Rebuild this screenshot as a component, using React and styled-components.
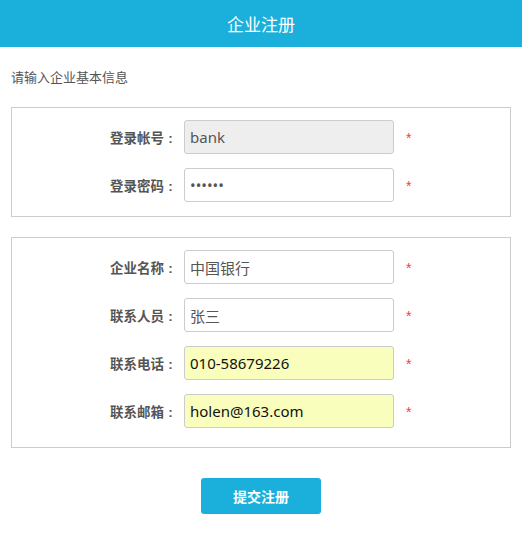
import React from 'react';
import styled, { createGlobalStyle } from 'styled-components';

const GlobalStyle = createGlobalStyle`
    html, body {
        margin: 0;
        padding: 0;
        background: #fff;
    }

    body {
        font-family: "Noto Sans", "Noto Sans CJK SC", sans-serif;
        color: #555;
    }
`;

const BRAND_COLOR = '#1bb0db';

const Header = styled.div`
    height: 47px;
    background-color: ${BRAND_COLOR};
    color: #fff;
    font-size: 17px;
    display: flex;
    align-items: center;
    justify-content: center;
    font-family: "Noto Sans CJK SC", sans-serif;
`;

const Page = styled.div`
    padding: 0 11px;
`;

const Intro = styled.div`
    font-family: "Noto Sans CJK SC", sans-serif;
    font-size: 13px;
    color: #555;
    margin: 21px 0 21px;
    line-height: 18px;
`;

const Fieldset = styled.div`
    border: 1px solid #ccc;
    padding: 12px 0 ${(p) => p.bottom}px;
    margin-bottom: 20px;
    display: flex;
    flex-direction: column;
    gap: 14px;
`;

const Row = styled.div`
    display: flex;
    align-items: center;
    height: 34px;
`;

const Label = styled.label`
    width: 165px;
    display: flex;
    align-items: baseline;
    justify-content: flex-end;
    font-family: "Noto Sans CJK SC", sans-serif;
    font-weight: bold;
    font-size: 13.5px;
    color: #555;
`;

const Colon = styled.span`
    width: 13px;
    text-align: center;
    font-family: "Liberation Sans", sans-serif;
    font-weight: bold;
`;

const Input = styled.input`
    box-sizing: border-box;
    width: 210px;
    height: 34px;
    margin-left: 7px;
    padding: 0 5px;
    border: 1px solid #ccc;
    border-radius: 3px;
    font-family: "Noto Sans", "Noto Sans CJK SC", sans-serif;
    font-size: 15px;
    color: ${(p) => (p.filled ? '#111' : '#555')};
    background-color: ${(p) => {
        if (p.readOnly) return '#eee';
        if (p.filled) return '#fafebd';
        return '#fff';
    }};
    outline: none;
`;

const Required = styled.span`
    margin-left: 12px;
    margin-top: 2px;
    color: #e8433b;
    font-size: 14px;
    font-family: "Liberation Sans", sans-serif;
`;

const Actions = styled.div`
    display: flex;
    justify-content: center;
    margin-top: 30px;
`;

const SubmitButton = styled.button`
    width: 120px;
    height: 36px;
    border: none;
    border-radius: 3px;
    background-color: ${BRAND_COLOR};
    color: #fff;
    font-family: "Noto Sans CJK SC", sans-serif;
    font-weight: bold;
    font-size: 14px;
    cursor: pointer;
`;

const accountFields = [
    { label: '登录帐号', value: 'bank', readOnly: true },
    { label: '登录密码', value: '123456', type: 'password' },
];

const companyFields = [
    { label: '企业名称', value: '中国银行' },
    { label: '联系人员', value: '张三' },
    { label: '联系电话', value: '010-58679226', filled: true },
    { label: '联系邮箱', value: 'holen@163.com', filled: true },
];

const Field = ({ label, value, type = 'text', readOnly, filled }) => (
    <Row>
        <Label>
            {label}
            <Colon>:</Colon>
        </Label>
        <Input
            type={type}
            defaultValue={value}
            readOnly={readOnly}
            filled={filled}
        />
        <Required>*</Required>
    </Row>
);

const App = () => (
    <>
        <GlobalStyle />
        <Header>企业注册</Header>
        <Page>
            <Intro>请输入企业基本信息</Intro>
            <Fieldset bottom={14}>
                {accountFields.map((f) => (
                    <Field key={f.label} {...f} />
                ))}
            </Fieldset>
            <Fieldset bottom={19}>
                {companyFields.map((f) => (
                    <Field key={f.label} {...f} />
                ))}
            </Fieldset>
            <Actions>
                <SubmitButton type="button">提交注册</SubmitButton>
            </Actions>
        </Page>
    </>
);

export default App;
